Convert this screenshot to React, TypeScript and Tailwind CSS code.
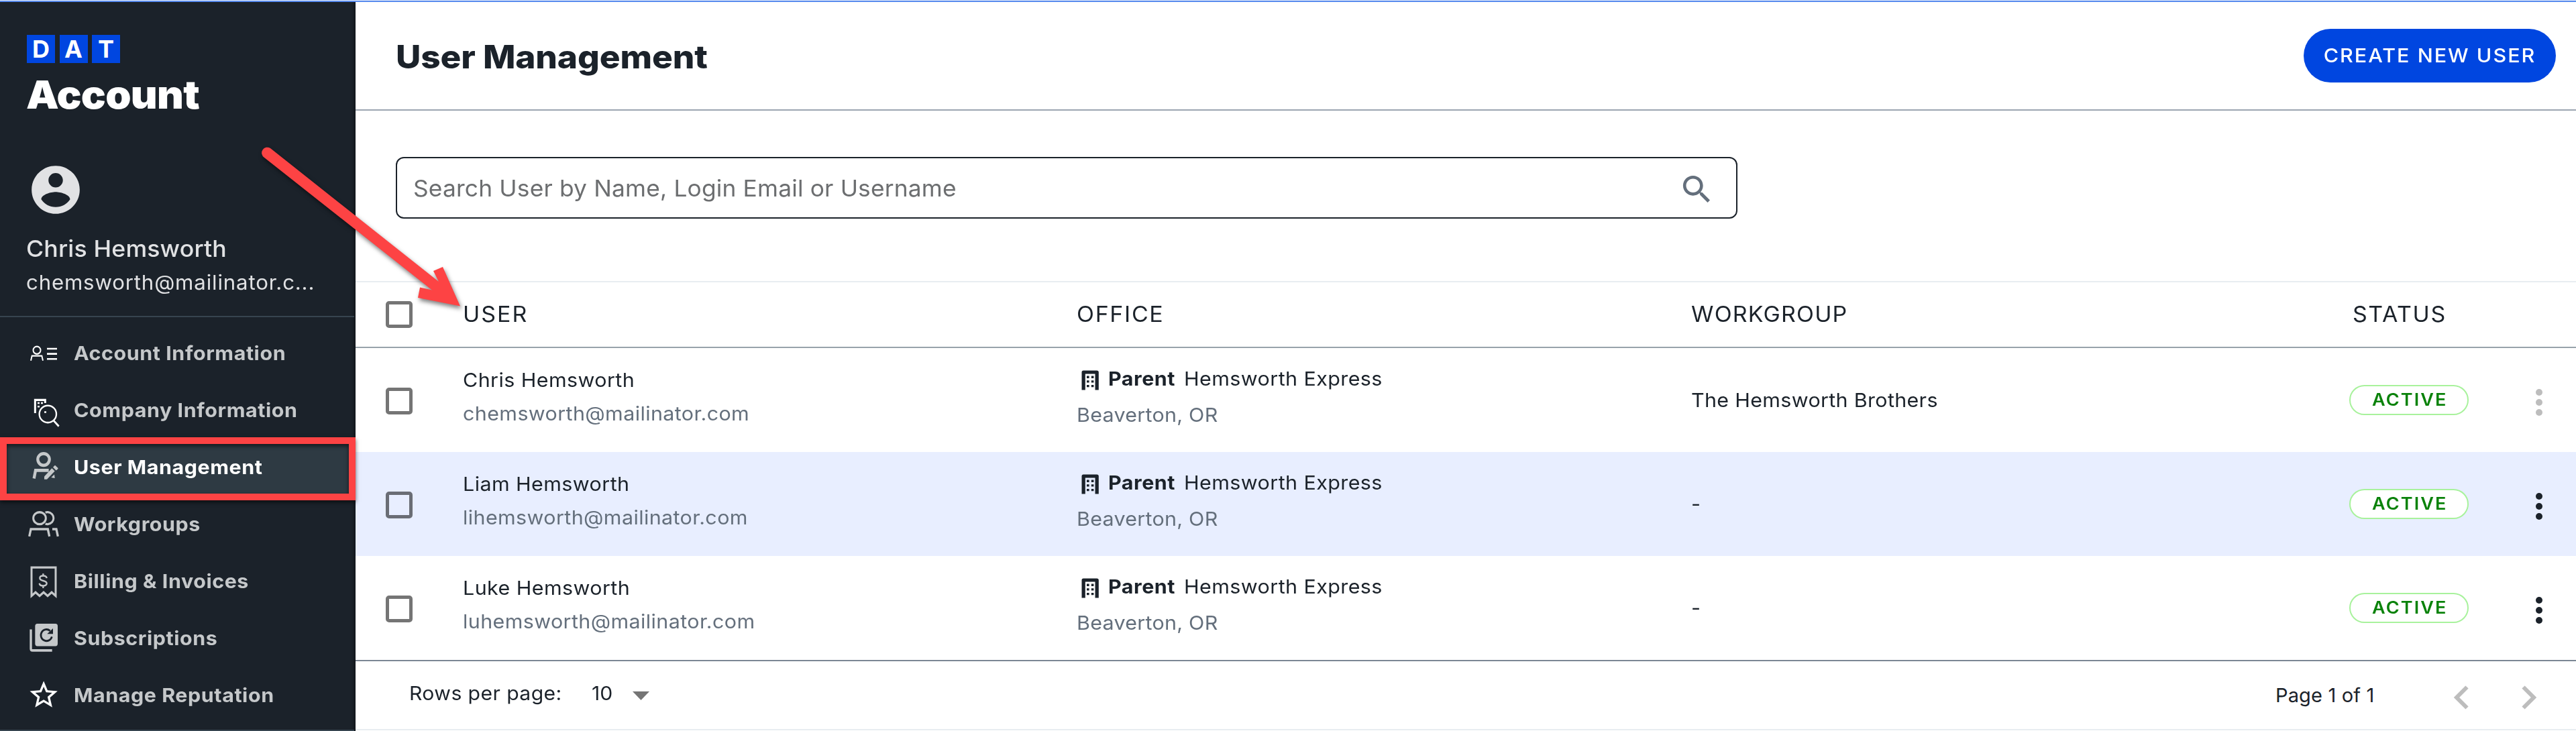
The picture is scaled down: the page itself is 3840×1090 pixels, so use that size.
import type { ReactNode } from "react";

const ROW_ICON_SCALE = "scale(1 1.0906)";

function MenuIcon({ top, color, children }: { top: number; color: string; children: ReactNode }) {
  return (
    <svg width="80" height="85" viewBox={`0 ${top} 240 255`} fill="none" stroke={color} className="ml-[30px] shrink-0">
      <g transform={ROW_ICON_SCALE}>{children}</g>
    </svg>
  );
}

const GREY = "#c5c8ca";

const menu: { label: string; active?: boolean; icon: ReactNode }[] = [
  {
    label: "Account Information",
    icon: (
      <MenuIcon top={-45} color="#ffffff">
        <ellipse cx="75" cy="61" rx="16.5" ry="15.5" strokeWidth="6" />
        <path d="M48 104 L53 84 H97 L102 104" strokeWidth="6" />
        <path d="M120 55 H165 M120 76 H165 M120 97 H165" strokeWidth="7" />
      </MenuIcon>
    ),
  },
  {
    label: "Company Information",
    icon: (
      <MenuIcon top={210} color="#ffffff">
        <path d="M67 319 V265 H112 V278" strokeWidth="9" />
        <path d="M78 278 H87 M93 278 H102 M78 292 H87 M108 315 H117" strokeWidth="7" />
        <ellipse cx="124" cy="323" rx="38" ry="35" strokeWidth="7" />
        <path d="M150 350 L173 373" strokeWidth="8" />
      </MenuIcon>
    ),
  },
  {
    label: "User Management",
    active: true,
    icon: (
      <MenuIcon top={465} color={GREY}>
        <ellipse cx="105" cy="509" rx="26" ry="24" strokeWidth="13" />
        <path d="M62 587 L69 554 H128" strokeWidth="13" />
        <path d="M108 591 V579 L142 545 L155 557 L120 591 Z" fill={GREY} stroke="none" />
        <path d="M147 541 L154 534 Q158 533 161 537 L169 544 Q171 547 168 549 L161 554 Z" fill={GREY} stroke="none" />
        <path d="M139 583 L153 571 L155 586 Z" fill={GREY} stroke="none" />
      </MenuIcon>
    ),
  },
  {
    label: "Workgroups",
    icon: (
      <MenuIcon top={720} color={GREY}>
        <ellipse cx="87" cy="750" rx="28" ry="24.5" strokeWidth="9" />
        <path d="M113 727 Q118 725 124 725.5 C158 729 158 771 124 774.5 Q118 775 113 773" strokeWidth="9" />
        <path d="M41 825 L48 795 H124 L131 825" strokeWidth="10" />
        <path d="M144 795 H162 L169 825" strokeWidth="10" />
      </MenuIcon>
    ),
  },
  {
    label: "Billing & Invoices",
    icon: (
      <MenuIcon top={975} color={GREY}>
        <path d="M51 1069 V952 H159 V1069 L141 1054 L123 1069 L105 1054 L87 1069 L69 1054 Z" strokeWidth="9" />
        <path d="M119 996 C117 983 88 983 88 996 C88 1011 119 1003 119 1018 C119 1031 88 1031 86 1017 M103 977 V987 M103 1027 V1037" strokeWidth="7" />
      </MenuIcon>
    ),
  },
  {
    label: "Subscriptions",
    icon: (
      <MenuIcon top={1230} color={GREY}>
        <path d="M48 1206 V1286 Q48 1292.5 55 1292.5 H143" strokeWidth="10" />
        <rect x="67" y="1183" width="101" height="92" rx="10" fill={GREY} stroke="none" />
        <path d="M134 1212 A25 23.5 0 1 0 142 1236" strokeWidth="8" stroke="#1b222a" />
        <path d="M147 1202 V1225 H121 Z" fill="#1b222a" stroke="none" />
      </MenuIcon>
    ),
  },
  {
    label: "Manage Reputation",
    icon: (
      <MenuIcon top={1485} color="#ffffff">
        <g transform="translate(31 1406.5) scale(6.2 5.69)">
          <path
            fill="#ffffff"
            stroke="none"
            d="M22 9.24l-7.19-.62L12 2 9.19 8.63 2 9.24l5.46 4.73L5.82 21 12 17.27 18.18 21l-1.63-7.03L22 9.24zM12 15.4l-3.76 2.27 1-4.28-3.32-2.88 4.38-.38L12 6.1l1.71 4.04 4.38.38-3.32 2.88 1 4.28L12 15.4z"
          />
        </g>
      </MenuIcon>
    ),
  },
];

const users = [
  { name: "Chris Hemsworth", email: "chemsworth@mailinator.com", group: "The Hemsworth Brothers", locked: true },
  { name: "Liam Hemsworth", email: "lihemsworth@mailinator.com", group: "-", shaded: true },
  { name: "Luke Hemsworth", email: "luhemsworth@mailinator.com", group: "-" },
];

function Checkbox() {
  return <div className="h-10 w-10 rounded-[5px] border-[5px] border-black/54" />;
}

function OfficeIcon() {
  return (
    <svg width="47" height="30" viewBox="0 0 47 30" className="mt-1 shrink-0" fill="#1b222a">
      <path d="M7.5 29.5 V3 Q7.5 0.5 10 0.5 H30 Q32.8 0.5 32.8 3 V29.5 H27.5 V5.5 H12.8 V29.5 Z" />
      <path d="M15 8.5h3.6v3.4h-3.6z M21.8 8.5h3.6v3.4h-3.6z M15 15.2h3.6v3.4h-3.6z M21.8 15.2h3.6v3.4h-3.6z M15 21.9h3.6v3.4h-3.6z M21.8 21.9h3.6v3.4h-3.6z" />
    </svg>
  );
}

function Sidebar() {
  return (
    <aside className="relative flex w-[530px] shrink-0 flex-col bg-[#1b222a] shadow-[inset_-4px_0_4px_-2px_rgba(0,0,0,0.45)]">
      <div className="mt-[49px] ml-10 flex gap-[6.5px] text-[36px] leading-[42px] font-bold text-white">
        {["D", "A", "T"].map((c) => (
          <span key={c} className="h-[42px] w-[42px] bg-[#0046e0] text-center">{c}</span>
        ))}
      </div>
      <div className="mt-[17px] ml-[39px] origin-left scale-x-[1.06] text-[58px] leading-[60px] font-black tracking-[-0.7px] text-white">Account</div>
      <svg width="86" height="86" viewBox="0 0 24 24" className="mt-[69px] ml-10 shrink-0" fill="#e1e2e4">
        <path d="M12 2C6.48 2 2 6.48 2 12s4.48 10 10 10 10-4.48 10-10S17.52 2 12 2zm0 3c1.66 0 3 1.34 3 3s-1.34 3-3 3-3-1.34-3-3 1.34-3 3-3zm0 14.2c-2.5 0-4.71-1.28-6-3.22.03-1.99 4-3.08 6-3.08 1.99 0 5.97 1.09 6 3.08-1.29 1.94-3.5 3.22-6 3.22z" />
      </svg>
      <div className="mt-[25px] ml-[39px] origin-left scale-x-[1.05] text-[34px] leading-10 font-medium tracking-[0.14px] text-[#e1e2e4]">Chris Hemsworth</div>
      <div className="mt-[10px] ml-[39px] origin-left scale-x-[1.04] text-[30px] leading-10 tracking-[0.8px] text-[#e1e2e4]">chemsworth@mailinator.c...</div>
      <div className="mt-[30px] mr-[2px] h-[2px] shrink-0 bg-[#37444f]" />
      <nav className="mt-3 flex flex-col">
        {menu.map((m) => (
          <div
            key={m.label}
            className={
              m.active
                ? "relative flex h-[85px] items-center bg-[#2e3a43] text-white"
                : "flex h-[85px] items-center text-[#c5c8ca]"
            }
          >
            {m.icon}
            <span className="origin-left scale-x-[1.05] pb-[2px] text-[29px] font-bold tracking-[0.53px]">{m.label}</span>
            {m.active && (
              <div className="absolute -top-[3px] left-0 h-[94px] w-[530px] border-[10px] border-[#fd4344] shadow-[0_3px_6px_rgba(0,0,0,0.6),inset_0_3px_6px_rgba(0,0,0,0.6)]" />
            )}
          </div>
        ))}
      </nav>
      <div className="mt-2 mr-[2px] h-[2px] shrink-0 bg-[#37444f]" />
    </aside>
  );
}

export default function App() {
  return (
    <div className="relative h-[1090px] w-[3840px] overflow-hidden bg-white font-['Inter',sans-serif] text-[#1b222a]">
      <div className="h-[3px] border-b-2 border-[#588bee] bg-[#e9effc]" />
      <div className="flex h-[1087px]">
        <Sidebar />
        <main className="flex w-[3310px] flex-col">
          <header className="flex h-[162px] shrink-0 items-center justify-between border-b-2 border-[#9ba5b1] pr-[30px] pl-[60px]">
            <h1 className="origin-left scale-x-[1.07] pt-[3px] text-[48px] leading-[60px] font-extrabold tracking-[-0.1px]">User Management</h1>
            <button className="h-20 w-[376px] rounded-full bg-[#0046e0] text-[28.5px] font-medium text-white">
              <span className="inline-block scale-x-[1.07] tracking-[1.88px]">CREATE NEW USER</span>
            </button>
          </header>

          <div className="mt-[69px] ml-[60px] flex h-[92px] w-[2000px] shrink-0 items-center justify-between rounded-[12px] border-2 border-[#1b222a] pr-[31px] pl-6">
            <span className="origin-left scale-x-[1.04] text-[34px] tracking-[0.15px] text-[#6c6e70]">Search User by Name, Login Email or Username</span>
            <svg width="55" height="55" viewBox="0 0 24 24" fill="#646f7c" className="mt-[5px]">
              <path d="M15.5 14h-.79l-.28-.27C15.41 12.59 16 11.11 16 9.5 16 5.91 13.09 3 9.5 3S3 5.91 3 9.5 5.91 16 9.5 16c1.61 0 3.09-.59 4.23-1.57l.27.28v.79l5 4.99L20.49 19l-4.99-5zm-6 0C7.01 14 5 11.99 5 9.5S7.01 5 9.5 5 14 7.01 14 9.5 11.99 14 9.5 14z" />
            </svg>
          </div>

          <section className="mt-[93px] flex flex-col border-t-2 border-[#e8edf1]">
            <div className="grid h-[98px] grid-cols-[160px_915px_915px_987px_1fr] items-center border-b-2 border-[#98a3ab] text-[32px]">
              <div className="pl-[45px]"><Checkbox /></div>
              <div className="origin-left scale-x-[1.06] tracking-[1.9px]">USER</div>
              <div className="origin-left scale-x-[1.06] tracking-[1.6px]">OFFICE</div>
              <div className="origin-left scale-x-[1.06] pl-px tracking-[1.1px]">WORKGROUP</div>
              <div className="origin-left scale-x-[1.06] tracking-[1.5px]">STATUS</div>
            </div>
            {users.map((u) => (
              <div
                key={u.name}
                className={
                  "grid h-[155px] grid-cols-[160px_915px_915px_982px_1fr] items-center text-[29px] tracking-[0.4px] " +
                  (u.shaded ? "bg-[#e8eeff]" : "")
                }
              >
                <div className="pt-[3px] pl-[45px]"><Checkbox /></div>
                <div className="origin-left scale-x-[1.05] pb-[9px]">
                  <div className="leading-[50px]">{u.name}</div>
                  <div className="leading-[50px] tracking-[0.37px] text-[#646f7c]">{u.email}</div>
                </div>
                <div className="pb-[8px]">
                  <div className="flex h-[52px] items-center">
                    <OfficeIcon />
                    <span className="w-[113px] origin-left scale-x-[1.05] font-bold tracking-[0.46px]">Parent</span>
                    <span className="origin-left scale-x-[1.05]">Hemsworth Express</span>
                  </div>
                  <div className="origin-left scale-x-[1.05] leading-[55px] tracking-[0.26px] text-[#646f7c]">Beaverton, OR</div>
                </div>
                <div className="origin-left scale-x-[1.05] pl-px tracking-[0.31px]">{u.group}</div>
                <div className="flex items-center">
                  <span className="flex h-[45px] w-[178px] items-center justify-center rounded-full border-2 border-[#a8f29c] bg-white text-[25px] font-semibold text-[#0a820a]">
                    <span className="scale-x-[1.08] pl-[2px] tracking-[2px]">ACTIVE</span>
                  </span>
                  <span className={"ml-[100px] flex flex-col gap-[5px] pt-[7px] " + (u.locked ? "text-[#bdbdbd]" : "text-[#1b222a]")}>
                    <i className="h-[10px] w-[10px] rounded-full bg-current" />
                    <i className="h-[10px] w-[10px] rounded-full bg-current" />
                    <i className="h-[10px] w-[10px] rounded-full bg-current" />
                  </span>
                </div>
              </div>
            ))}
          </section>

          <footer className="flex h-[105px] shrink-0 items-center justify-between border-t-2 border-b-2 border-t-[#7b8794] border-b-[#e8edf1] pr-[58px] pl-20 text-[29px]">
            <div className="flex items-center pb-[5px]">
              <span className="w-[272px] origin-left scale-x-[1.04] tracking-[0.39px]">Rows per page:</span>
              <span className="w-[61px] origin-left scale-x-[1.04]">10</span>
              <svg width="25" height="13" viewBox="0 0 25 13" className="mt-[6px]"><path d="M0 0H25L12.5 13Z" fill="#757575" /></svg>
            </div>
            <div className="flex items-center">
              <span className="w-[265px] tracking-[0.15px]">Page 1 of 1</span>
              <svg width="24" height="36" viewBox="0 0 24 36" fill="none" stroke="#bdbdbd" strokeWidth="6" className="mt-[7px] mr-[77px]">
                <path d="M20.5 2.5 L5 18 L20.5 33.5" />
              </svg>
              <svg width="24" height="36" viewBox="0 0 24 36" fill="none" stroke="#bdbdbd" strokeWidth="6" className="mt-[7px]">
                <path d="M3.5 2.5 L19 18 L3.5 33.5" />
              </svg>
            </div>
          </footer>
        </main>
      </div>

      <svg width="340" height="270" viewBox="370 205 340 270" className="pointer-events-none absolute top-[205px] left-[370px] drop-shadow-[2px_4px_3px_rgba(0,0,0,0.5)]">
        <path
          fill="#fd4344"
          d="M403 221 L654 420 L646 404 L660 398 L686 456.5 L623 444 L626 428.5 L644 432.5 L394 235 A8.3 8.3 0 0 1 403 221 Z"
        />
      </svg>
    </div>
  );
}
